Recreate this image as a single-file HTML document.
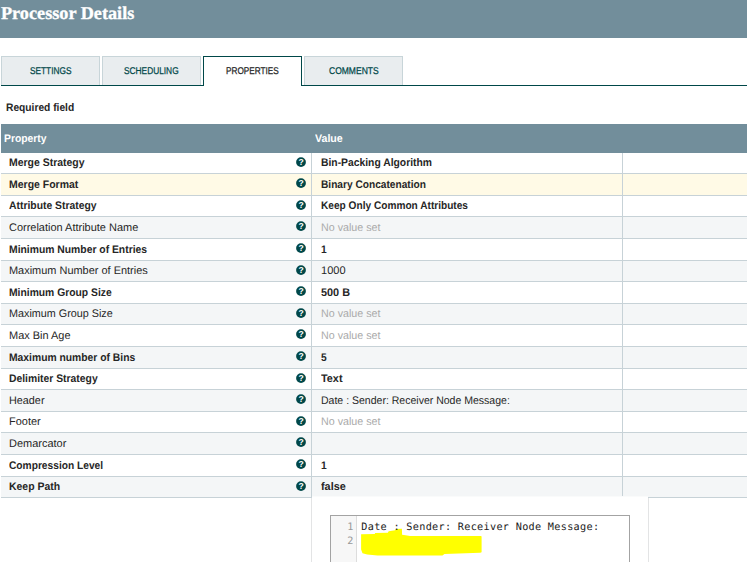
<!DOCTYPE html>
<html><head><meta charset="utf-8"><title>Processor Details</title>
<style>
html,body{margin:0;padding:0;}
body{width:747px;height:562px;overflow:hidden;background:#fff;position:relative;font-family:"Liberation Sans",sans-serif;}
.bg{position:absolute;left:0;top:0;}
.t{position:absolute;white-space:nowrap;transform-origin:0 50%;display:block;text-rendering:geometricPrecision;}
.title{top:2.1px;font-family:"Liberation Serif",serif;font-weight:bold;font-size:18px;color:#fff;line-height:22px;-webkit-text-stroke:0.3px #fff;}
.tabt{top:65.1px;-webkit-text-stroke:0.25px #004849;font-size:9.8px;line-height:14px;color:#004849;}
.tabt.act{color:#262626;-webkit-text-stroke:0.25px #262626;}
.req{top:100.7px;font-size:11px;font-weight:bold;color:#262626;line-height:14px;}
.th{top:131.7px;color:#fff;font-weight:bold;font-size:11px;line-height:14px;}
.rt{font-size:11px;line-height:14px;color:#262626;}
.rt.b{font-weight:bold;}
.rt.unset{color:#aaaaaa;}
.ln{position:absolute;left:330px;width:23.3px;text-align:right;font-family:"DejaVu Sans Mono","Liberation Mono",monospace;font-size:10.2px;color:#999999;line-height:14.4px;text-rendering:geometricPrecision;}
.code{position:absolute;left:361.3px;top:520.9px;text-rendering:geometricPrecision;font-family:"DejaVu Sans Mono","Liberation Mono",monospace;font-size:10.2px;letter-spacing:0.3px;color:#1a1a1a;line-height:14.4px;white-space:pre;}
</style></head><body>
<svg class="bg" width="747" height="562" viewBox="0 0 747 562">
<g shape-rendering="crispEdges">
<rect x="0" y="0" width="747" height="38" fill="#728e9b"/>
<rect x="1" y="56" width="99" height="29" fill="#c8d5d9"/><rect x="2" y="57" width="97" height="28" fill="#e9edef"/>
<rect x="102" y="56" width="99" height="29" fill="#c8d5d9"/><rect x="103" y="57" width="97" height="28" fill="#e9edef"/>
<rect x="304" y="56" width="99" height="29" fill="#c8d5d9"/><rect x="305" y="57" width="97" height="28" fill="#e9edef"/>
<rect x="1" y="85" width="746" height="1" fill="#004849"/>
<rect x="203" y="56" width="99" height="30" fill="#004849"/><rect x="204" y="57" width="97" height="29" fill="#fff"/>
<rect x="1" y="124" width="746" height="29" fill="#728e9b"/>
<rect x="1" y="153" width="746" height="20" fill="#ffffff"/>
<rect x="1" y="173" width="746" height="1" fill="#c7d2d7"/>
<rect x="1" y="174" width="746" height="21" fill="#fffae6"/>
<rect x="1" y="195" width="746" height="1" fill="#c7d2d7"/>
<rect x="1" y="196" width="746" height="20" fill="#ffffff"/>
<rect x="1" y="216" width="746" height="1" fill="#c7d2d7"/>
<rect x="1" y="217" width="746" height="21" fill="#f4f6f7"/>
<rect x="1" y="238" width="746" height="1" fill="#c7d2d7"/>
<rect x="1" y="239" width="746" height="21" fill="#ffffff"/>
<rect x="1" y="260" width="746" height="1" fill="#c7d2d7"/>
<rect x="1" y="261" width="746" height="20" fill="#f4f6f7"/>
<rect x="1" y="281" width="746" height="1" fill="#c7d2d7"/>
<rect x="1" y="282" width="746" height="21" fill="#ffffff"/>
<rect x="1" y="303" width="746" height="1" fill="#c7d2d7"/>
<rect x="1" y="304" width="746" height="20" fill="#f4f6f7"/>
<rect x="1" y="324" width="746" height="1" fill="#c7d2d7"/>
<rect x="1" y="325" width="746" height="21" fill="#ffffff"/>
<rect x="1" y="346" width="746" height="1" fill="#c7d2d7"/>
<rect x="1" y="347" width="746" height="21" fill="#f4f6f7"/>
<rect x="1" y="368" width="746" height="1" fill="#c7d2d7"/>
<rect x="1" y="369" width="746" height="20" fill="#ffffff"/>
<rect x="1" y="389" width="746" height="1" fill="#c7d2d7"/>
<rect x="1" y="390" width="746" height="21" fill="#f4f6f7"/>
<rect x="1" y="411" width="746" height="1" fill="#c7d2d7"/>
<rect x="1" y="412" width="746" height="20" fill="#ffffff"/>
<rect x="1" y="432" width="746" height="1" fill="#c7d2d7"/>
<rect x="1" y="433" width="746" height="21" fill="#f4f6f7"/>
<rect x="1" y="454" width="746" height="1" fill="#c7d2d7"/>
<rect x="1" y="455" width="746" height="21" fill="#ffffff"/>
<rect x="1" y="476" width="746" height="1" fill="#c7d2d7"/>
<rect x="1" y="477" width="746" height="20" fill="#f4f6f7"/>
<rect x="1" y="497" width="746" height="1" fill="#c7d2d7"/>
<rect x="311" y="153" width="1" height="344" fill="#c7d2d7"/>
<rect x="622" y="153" width="1" height="344" fill="#c7d2d7"/>
</g>
<g transform="translate(301 162.10)"><circle r="4.9" fill="#004849"/><text x="0" y="3.1" text-anchor="middle" font-family="Liberation Sans, sans-serif" font-weight="bold" font-size="8.6" fill="#fff">?</text></g>
<g transform="translate(301 183.10)"><circle r="4.9" fill="#004849"/><text x="0" y="3.1" text-anchor="middle" font-family="Liberation Sans, sans-serif" font-weight="bold" font-size="8.6" fill="#fff">?</text></g>
<g transform="translate(301 205.10)"><circle r="4.9" fill="#004849"/><text x="0" y="3.1" text-anchor="middle" font-family="Liberation Sans, sans-serif" font-weight="bold" font-size="8.6" fill="#fff">?</text></g>
<g transform="translate(301 226.10)"><circle r="4.9" fill="#004849"/><text x="0" y="3.1" text-anchor="middle" font-family="Liberation Sans, sans-serif" font-weight="bold" font-size="8.6" fill="#fff">?</text></g>
<g transform="translate(301 248.10)"><circle r="4.9" fill="#004849"/><text x="0" y="3.1" text-anchor="middle" font-family="Liberation Sans, sans-serif" font-weight="bold" font-size="8.6" fill="#fff">?</text></g>
<g transform="translate(301 270.10)"><circle r="4.9" fill="#004849"/><text x="0" y="3.1" text-anchor="middle" font-family="Liberation Sans, sans-serif" font-weight="bold" font-size="8.6" fill="#fff">?</text></g>
<g transform="translate(301 291.10)"><circle r="4.9" fill="#004849"/><text x="0" y="3.1" text-anchor="middle" font-family="Liberation Sans, sans-serif" font-weight="bold" font-size="8.6" fill="#fff">?</text></g>
<g transform="translate(301 313.10)"><circle r="4.9" fill="#004849"/><text x="0" y="3.1" text-anchor="middle" font-family="Liberation Sans, sans-serif" font-weight="bold" font-size="8.6" fill="#fff">?</text></g>
<g transform="translate(301 334.10)"><circle r="4.9" fill="#004849"/><text x="0" y="3.1" text-anchor="middle" font-family="Liberation Sans, sans-serif" font-weight="bold" font-size="8.6" fill="#fff">?</text></g>
<g transform="translate(301 356.10)"><circle r="4.9" fill="#004849"/><text x="0" y="3.1" text-anchor="middle" font-family="Liberation Sans, sans-serif" font-weight="bold" font-size="8.6" fill="#fff">?</text></g>
<g transform="translate(301 378.10)"><circle r="4.9" fill="#004849"/><text x="0" y="3.1" text-anchor="middle" font-family="Liberation Sans, sans-serif" font-weight="bold" font-size="8.6" fill="#fff">?</text></g>
<g transform="translate(301 399.10)"><circle r="4.9" fill="#004849"/><text x="0" y="3.1" text-anchor="middle" font-family="Liberation Sans, sans-serif" font-weight="bold" font-size="8.6" fill="#fff">?</text></g>
<g transform="translate(301 421.10)"><circle r="4.9" fill="#004849"/><text x="0" y="3.1" text-anchor="middle" font-family="Liberation Sans, sans-serif" font-weight="bold" font-size="8.6" fill="#fff">?</text></g>
<g transform="translate(301 442.10)"><circle r="4.9" fill="#004849"/><text x="0" y="3.1" text-anchor="middle" font-family="Liberation Sans, sans-serif" font-weight="bold" font-size="8.6" fill="#fff">?</text></g>
<g transform="translate(301 464.10)"><circle r="4.9" fill="#004849"/><text x="0" y="3.1" text-anchor="middle" font-family="Liberation Sans, sans-serif" font-weight="bold" font-size="8.6" fill="#fff">?</text></g>
<g transform="translate(301 486.10)"><circle r="4.9" fill="#004849"/><text x="0" y="3.1" text-anchor="middle" font-family="Liberation Sans, sans-serif" font-weight="bold" font-size="8.6" fill="#fff">?</text></g>
</svg>
<span class="t title" style="left:1.04px;transform:scaleX(1.0112);">Processor Details</span>
<span class="t tabt" style="left:30.17px;transform:scaleX(0.8462);">SETTINGS</span>
<span class="t tabt" style="left:124.07px;transform:scaleX(0.8503);">SCHEDULING</span>
<span class="t tabt act" style="left:226.00px;transform:scaleX(0.8381);">PROPERTIES</span>
<span class="t tabt" style="left:328.80px;transform:scaleX(0.8695);">COMMENTS</span>
<span class="t req" style="left:6.20px;transform:scaleX(0.9300);">Required field</span>
<span class="t th" style="left:4.30px;transform:scaleX(0.9400);">Property</span>
<span class="t th" style="left:314.96px;transform:scaleX(0.9655);">Value</span>
<span class="t rt b" style="left:9.00px;top:156px;transform:scaleX(0.9509);">Merge Strategy</span>
<span class="t rt b" style="left:321.00px;top:156px;transform:scaleX(0.9396);">Bin-Packing Algorithm</span>
<span class="t rt b" style="left:9.00px;top:178px;transform:scaleX(0.9530);">Merge Format</span>
<span class="t rt b" style="left:321.00px;top:178px;transform:scaleX(0.9235);">Binary Concatenation</span>
<span class="t rt b" style="left:9.00px;top:199px;transform:scaleX(0.9424);">Attribute Strategy</span>
<span class="t rt b" style="left:321.00px;top:199px;transform:scaleX(0.9204);">Keep Only Common Attributes</span>
<span class="t rt" style="left:9.00px;top:221px;transform:scaleX(0.9972);">Correlation Attribute Name</span>
<span class="t rt unset" style="left:321.00px;top:221px;transform:scaleX(0.9720);">No value set</span>
<span class="t rt b" style="left:9.00px;top:243px;transform:scaleX(0.9413);">Minimum Number of Entries</span>
<span class="t rt b" style="left:321.00px;top:243px;transform:scaleX(0.9300);">1</span>
<span class="t rt" style="left:9.00px;top:264px;transform:scaleX(0.9954);">Maximum Number of Entries</span>
<span class="t rt" style="left:321.00px;top:264px;transform:scaleX(1.0020);">1000</span>
<span class="t rt b" style="left:9.00px;top:286px;transform:scaleX(0.9384);">Minimum Group Size</span>
<span class="t rt b" style="left:321.00px;top:286px;transform:scaleX(0.9880);">500 B</span>
<span class="t rt" style="left:9.00px;top:307px;transform:scaleX(0.9810);">Maximum Group Size</span>
<span class="t rt unset" style="left:321.00px;top:307px;transform:scaleX(0.9720);">No value set</span>
<span class="t rt" style="left:9.00px;top:329px;transform:scaleX(0.9963);">Max Bin Age</span>
<span class="t rt unset" style="left:321.00px;top:329px;transform:scaleX(0.9720);">No value set</span>
<span class="t rt b" style="left:9.00px;top:351px;transform:scaleX(0.9385);">Maximum number of Bins</span>
<span class="t rt b" style="left:321.00px;top:351px;transform:scaleX(0.9300);">5</span>
<span class="t rt b" style="left:9.00px;top:372px;transform:scaleX(0.9417);">Delimiter Strategy</span>
<span class="t rt b" style="left:321.00px;top:372px;transform:scaleX(0.9858);">Text</span>
<span class="t rt" style="left:9.00px;top:394px;transform:scaleX(0.9834);">Header</span>
<span class="t rt" style="left:321.00px;top:394px;transform:scaleX(0.9562);">Date : Sender: Receiver Node Message:</span>
<span class="t rt" style="left:9.00px;top:415px;transform:scaleX(0.9962);">Footer</span>
<span class="t rt unset" style="left:321.00px;top:415px;transform:scaleX(0.9720);">No value set</span>
<span class="t rt" style="left:9.00px;top:437px;transform:scaleX(0.9976);">Demarcator</span>
<span class="t rt b" style="left:9.00px;top:459px;transform:scaleX(0.9275);">Compression Level</span>
<span class="t rt b" style="left:321.00px;top:459px;transform:scaleX(0.9300);">1</span>
<span class="t rt b" style="left:9.00px;top:480px;transform:scaleX(0.9494);">Keep Path</span>
<span class="t rt b" style="left:321.00px;top:480px;transform:scaleX(0.9882);">false</span>
<svg class="bg" width="747" height="562" viewBox="0 0 747 562">
<g shape-rendering="crispEdges">
<rect x="311" y="498" width="338" height="70" fill="#e3e4e5"/>
<rect x="312" y="497" width="336" height="70" fill="#fff"/>
<rect x="312" y="496" width="336" height="1" fill="#fafbfb"/>
<rect x="330" y="515" width="300" height="60" fill="#a3a3a3"/>
<rect x="331" y="516" width="298" height="60" fill="#fff"/>
<rect x="331" y="516" width="25" height="50" fill="#f7f7f7"/>
<rect x="356" y="516" width="1" height="50" fill="#dddddd"/>
</g>
<path d="M361.1 534.2 L374.7 534 L375.2 533 L387.8 532.8 L388.7 531.2 L395.2 530.3 L395.8 529.1 L401.9 528.8 L402.1 534.8 L405.6 535.3 L410 536 L481 536 Q481.6 536 481.6 537 L481.6 552 Q481.6 552.6 480 552.8 L444.5 554.1 L442.4 555.6 L377.5 555.4 L367.2 554.6 L362.5 553.2 L361.1 549.5 Z" fill="#ffff00"/>
</svg>
<span class="ln" style="top:520.9px;">1</span><span class="ln" style="top:534.9px;">2</span>
<span class="code">Date : Sender: Receiver Node Message:</span>
</body></html>
